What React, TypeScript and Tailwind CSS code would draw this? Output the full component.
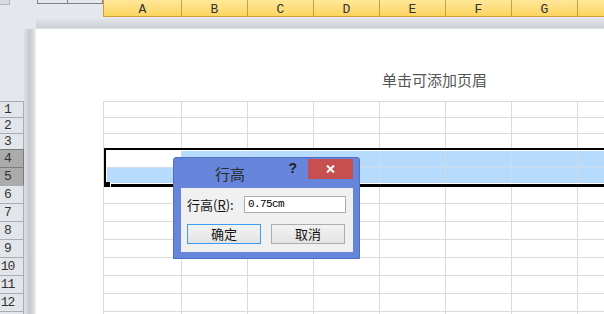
import React from 'react';

const cols = [
  { name: 'A', w: 'w-[78px]' },
  { name: 'B', w: 'w-[66px]' },
  { name: 'C', w: 'w-[66px]' },
  { name: 'D', w: 'w-[66px]' },
  { name: 'E', w: 'w-[66px]' },
  { name: 'F', w: 'w-[66px]' },
  { name: 'G', w: 'w-[66px]' },
  { name: '', w: 'flex-1' },
];

const rows = [
  { n: 1, h: 'h-[16px]' },
  { n: 2, h: 'h-[16px]' },
  { n: 3, h: 'h-[16px]' },
  { n: 4, h: 'h-[18px]' },
  { n: 5, h: 'h-[18px]' },
  { n: 6, h: 'h-[18px]' },
  { n: 7, h: 'h-[18px]' },
  { n: 8, h: 'h-[18px]' },
  { n: 9, h: 'h-[18px]' },
  { n: 10, h: 'h-[18px]' },
  { n: 11, h: 'h-[18px]' },
  { n: 12, h: 'h-[18px]' },
  { n: 13, h: 'h-[18px]' },
];

const mono = "font-['Liberation_Mono','DejaVu_Sans_Mono',monospace]";

function GridRow({ h, selected, firstWhite }: { h: string; selected?: boolean; firstWhite?: boolean }) {
  return (
    <div className={`flex ${h} border-t ${selected ? 'border-[#cfdbe7]' : 'border-[#dadada]'}`}>
      {cols.map((c, i) => (
        <div
          key={i}
          className={`${c.w} h-full border-l ${
            selected ? (i === 0 && firstWhite ? 'bg-white border-[#dadada]' : 'bg-[#b7dbfc] border-[#cfdbe7]') : 'border-[#dadada]'
          }`}
        />
      ))}
    </div>
  );
}

function Dialog() {
  return (
    <div className="absolute left-[173px] top-[157px] w-[187px] h-[102px] bg-[#6686dc] border border-[#4f6fc6] rounded-t-[3px] flex flex-col font-['Noto_Sans_CJK_SC','Liberation_Sans',sans-serif]">
      <div className="h-[30px] flex items-start">
        <span className="pl-[41px] pt-[8px] text-[15px] leading-[15px] text-[#2b2b2b]">行高</span>
        <span className="ml-auto mr-[11px] pt-[3px] text-[14px] leading-[14px] font-bold text-[#1e1e1e] font-['Liberation_Sans',sans-serif]">?</span>
        <div className="mt-[1px] mr-[6px] w-[45px] h-[20px] bg-[#c84f4f] flex items-center justify-center">
          <svg width="9" height="8" viewBox="0 0 9 8">
            <path d="M1 0.5 L8 7.5 M8 0.5 L1 7.5" stroke="white" strokeWidth="2" />
          </svg>
        </div>
      </div>
      <div className="ml-[7px] mr-[6px] h-[64px] bg-[#f0f0f0] flex flex-col">
        <div className="mt-[8px] h-[17px] flex items-center pl-[6px] pr-[7px]">
          <span className="text-[13px] leading-[13px] text-[#111]">
            行高(<span className="underline">R</span>):
          </span>
          <div className={`ml-auto w-[102px] h-[17px] bg-white border border-[#abadb3] pl-[3px] text-[11px] leading-[15px] tracking-[-0.6px] text-black ${mono}`}>
            0.75cm
          </div>
        </div>
        <div className="mt-[11px] flex pl-[6px] gap-[10px]">
          <div className="w-[74px] h-[20px] border border-[#3d9cf2] bg-gradient-to-b from-[#f3f3f3] to-[#e3e3e3] flex items-center justify-center text-[13px] text-[#111]">
            确定
          </div>
          <div className="w-[74px] h-[20px] border border-[#adadad] bg-gradient-to-b from-[#f3f3f3] to-[#e3e3e3] flex items-center justify-center text-[13px] text-[#111]">
            取消
          </div>
        </div>
      </div>
    </div>
  );
}

export default function App() {
  return (
    <div className="relative w-[604px] h-[314px] overflow-hidden bg-[#e4e7ec] flex flex-col">
      {/* column headers */}
      <div className="h-[19px] flex">
        <div className="w-[103px] flex items-start">
          <div className="w-[10px] h-[5px] border-r border-b border-[#b3b6bb] bg-[#d7dade]" />
          <div className="ml-[27px] w-[31px] h-[4px] border-x border-b border-[#7d8085]" />
          <div className="w-[35px] h-[4px] border-r border-b border-[#7d8085]" />
        </div>
        <div className="flex-1 flex border-b border-[#d29c3d] bg-gradient-to-b from-[#ffe799] to-[#fdd55f]">
          {cols.map((c, i) => (
            <div key={i} className={`${c.w} border-l border-[#d29c3d] flex justify-center pt-[3px] text-[13px] leading-[13px] text-[#333] ${mono}`}>
              {c.name}
            </div>
          ))}
        </div>
      </div>

      <div className="flex-1 flex">
        {/* row headers */}
        <div className="w-[24px] flex flex-col">
          <div className="h-[84px] shrink-0" />
          {rows.map((r) => {
            const sel = r.n === 4 || r.n === 5;
            return (
              <div
                key={r.n}
                className={`${r.h} shrink-0 border-t border-r flex items-center ${
                  sel ? 'bg-[#ababab] border-[#7b7b7b]' : 'bg-[#e2e5ea] border-[#a9adb3]'
                }`}
              >
                {r.n < 13 && (
                  <span className={`w-[15px] text-center text-[13px] leading-[13px] text-[#333] ${mono} tracking-[-1px]`}>{r.n}</span>
                )}
              </div>
            );
          })}
        </div>

        {/* page shadow */}
        <div className="w-[12px] flex flex-col">
          <div className="h-[12px]" />
          <div className="flex-1 bg-[linear-gradient(to_right,#dee1e5_0%,#c6cad0_45%,#d4d7dc_75%,#eef0f2_100%)]" />
        </div>

        {/* page */}
        <div className="flex-1 flex flex-col">
          <div className="h-[12px] bg-gradient-to-b from-[#e7e9ed] to-[#cbcfd5] border-b border-[#dfe2e6]" />
          <div className="flex-1 bg-white flex flex-col overflow-hidden">
            <div className="h-[72px] shrink-0 pl-[346px] pt-[43px] text-[15px] leading-[16px] text-[#555] font-['Noto_Sans_CJK_SC','Liberation_Sans',sans-serif]">
              单击可添加页眉
            </div>
            <div className="pl-[67px] flex flex-col">
              {rows.slice(0, 3).map((r) => (
                <GridRow key={r.n} h={r.h} />
              ))}
              <div className="relative">
                <GridRow h="h-[18px]" selected firstWhite />
                <GridRow h="h-[18px]" selected />
                <div className="absolute left-[1px] right-[-10px] top-[-1px] bottom-[-2px] border-t-2 border-b-[3px] border-l-2 border-black">
                  <div className="absolute inset-0 border-t border-b border-l border-white" />
                  <div className="absolute left-[-2px] bottom-[-3px] w-[7px] h-[5px] bg-black border-r border-white" />
                </div>
              </div>
              {rows.slice(5).map((r) => (
                <GridRow key={r.n} h={r.h} />
              ))}
            </div>
          </div>
        </div>
      </div>

      <Dialog />
    </div>
  );
}
